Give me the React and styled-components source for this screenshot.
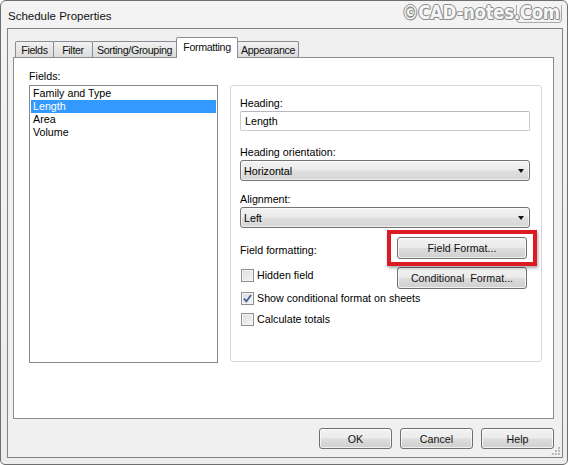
import styled, { createGlobalStyle } from "styled-components";

const GlobalStyle = createGlobalStyle`
  html, body {
    margin: 0;
    padding: 0;
    background: #ffffff;
  }
  body {
    font-family: "Liberation Sans", Arial, sans-serif;
    font-size: 10.7px;
    color: #000;
  }
`;

const tabs = [
  { label: "Fields", width: 39 },
  { label: "Filter", width: 40 },
  { label: "Sorting/Grouping", width: 85 },
  { label: "Formatting", width: 62, active: true },
  { label: "Appearance", width: 62 },
];

const fields = ["Family and Type", "Length", "Area", "Volume"];

export default function App() {
  return (
    <>
      <GlobalStyle />
      <Window>
        <TitleBar>
          <Title>Schedule Properties</Title>
          <CaptionButton />
        </TitleBar>
        <Watermark>©CAD-notes.Com</Watermark>
        <ClientFrame>
          <TabStrip>
            {tabs.map((tab) => (
              <Tab key={tab.label} $width={tab.width} $active={tab.active}>
                {tab.label}
              </Tab>
            ))}
          </TabStrip>
          <Panel>
            <FieldsLabel>Fields:</FieldsLabel>
            <ListBox>
              {fields.map((name) => (
                <ListItem key={name} $selected={name === "Length"}>
                  {name}
                </ListItem>
              ))}
            </ListBox>
            <GroupBox>
              <Label>Heading:</Label>
              <TextBox>Length</TextBox>
              <Label $gap={14}>Heading orientation:</Label>
              <Select>
                Horizontal
                <Arrow />
              </Select>
              <Label $gap={11}>Alignment:</Label>
              <Select>
                Left
                <Arrow />
              </Select>
              <FormatGrid>
                <GridLabel>Field formatting:</GridLabel>
                <Highlight>
                  <Button>Field Format...</Button>
                </Highlight>
                <CheckRow $offset={1}>
                  <CheckBox />
                  Hidden field
                </CheckRow>
                <Button>Conditional&nbsp; Format...</Button>
              </FormatGrid>
              <CheckList>
                <CheckRow>
                  <CheckBox $checked>
                    <svg width="9" height="9" viewBox="0 0 9 9">
                      <path
                        d="M1 4.6 L3.4 7.4 L8 1"
                        fill="none"
                        stroke="#3b5a9c"
                        strokeWidth="1.7"
                      />
                    </svg>
                  </CheckBox>
                  Show conditional format on sheets
                </CheckRow>
                <CheckRow>
                  <CheckBox />
                  Calculate totals
                </CheckRow>
              </CheckList>
            </GroupBox>
          </Panel>
          <ButtonRow>
            <Button $width={73}>OK</Button>
            <Button $width={73}>Cancel</Button>
            <Button $width={73}>Help</Button>
          </ButtonRow>
          <Grip>
            <svg width="8" height="8" viewBox="0 0 8 8">
              {[
                [6, 0],
                [6, 3],
                [3, 3],
                [6, 6],
                [3, 6],
                [0, 6],
              ].map(([x, y]) => (
                <rect key={`${x}-${y}`} x={x} y={y} width="2" height="2" fill="#b8b8b8" />
              ))}
            </svg>
          </Grip>
        </ClientFrame>
      </Window>
    </>
  );
}

const Window = styled.div`
  position: relative;
  box-sizing: border-box;
  width: 568px;
  height: 465px;
  border: 1px solid #6e6e6e;
  border-radius: 6px 6px 5px 5px;
  background: linear-gradient(#f3f3f3, #ececec);
  display: flex;
  flex-direction: column;
`;

const TitleBar = styled.div`
  height: 27px;
  display: flex;
  align-items: center;
  justify-content: space-between;
  padding: 2px 5px 0 7px;
  box-sizing: border-box;
`;

const Title = styled.span`
  font-size: 11.5px;
  color: #111;
`;

const CaptionButton = styled.div`
  width: 44px;
  height: 17px;
  margin-top: -4px;
  border: 1px solid #a9a9a9;
  border-top: none;
  border-radius: 0 0 4px 4px;
`;

const Watermark = styled.div`
  position: absolute;
  top: 0;
  right: 7px;
  font-family: "DejaVu Sans Condensed", "DejaVu Sans", sans-serif;
  font-weight: bold;
  font-size: 19px;
  letter-spacing: -0.3px;
  color: #f6f6f6;
  transform: scaleX(0.97);
  transform-origin: right center;
  text-shadow: -1px 0 #8c8c8c, 1px 0 #8c8c8c, 0 -1px #8c8c8c, 0 1px #8c8c8c,
    1px 1px #9a9a9a;
`;

const ClientFrame = styled.div`
  position: relative;
  box-sizing: border-box;
  height: 430px;
  margin: 0 4px 6px 6px;
  border: 1px solid #838383;
  background: #f0f0f0;
  padding: 8px 8px 0 5px;
  display: flex;
  flex-direction: column;
`;

const TabStrip = styled.div`
  height: 20px;
  display: flex;
  align-items: flex-end;
  padding-left: 2px;
`;

const Tab = styled.div`
  position: relative;
  box-sizing: border-box;
  width: ${(p) => p.$width}px;
  height: ${(p) => (p.$active ? 21 : 16)}px;
  margin-left: -1px;
  margin-bottom: ${(p) => (p.$active ? -1 : 0)}px;
  z-index: ${(p) => (p.$active ? 1 : 0)};
  border: 1px solid #898c95;
  border-bottom: none;
  border-radius: 2px 2px 0 0;
  background: ${(p) =>
    p.$active ? "#ffffff" : "linear-gradient(#f2f2f2, #e6e6e6 50%, #dcdcdc)"};
  display: flex;
  align-items: center;
  justify-content: center;
  padding-bottom: ${(p) => (p.$active ? 2 : 0)}px;
  white-space: nowrap;
  letter-spacing: -0.35px;
  color: #111;

  &:first-child {
    margin-left: 0;
  }
`;

const Panel = styled.div`
  box-sizing: border-box;
  height: 362px;
  border: 1px solid #898c95;
  background: #ffffff;
  padding: 11px 0 0 15px;
  display: grid;
  grid-template-columns: 189px 312px;
  grid-template-rows: 14px 278px;
  column-gap: 12px;
  row-gap: 2px;
  align-content: start;
`;

const FieldsLabel = styled.div`
  grid-column: 1;
  line-height: 14px;
`;

const ListBox = styled.div`
  grid-column: 1;
  grid-row: 2;
  box-sizing: border-box;
  border: 1px solid #828790;
  padding: 1px;
`;

const ListItem = styled.div`
  height: 13px;
  line-height: 13px;
  padding-left: 2px;
  background: ${(p) => (p.$selected ? "#3399ff" : "transparent")};
  color: ${(p) => (p.$selected ? "#ffffff" : "#000")};
`;

const GroupBox = styled.div`
  grid-column: 2;
  grid-row: 2;
  box-sizing: border-box;
  height: 277px;
  border: 1px solid #d5d9dc;
  border-radius: 3px;
  padding: 10px 11px 0 9px;
  display: flex;
  flex-direction: column;
`;

const Label = styled.div`
  line-height: 14px;
  margin-top: ${(p) => p.$gap || 0}px;
  margin-bottom: 1px;
`;

const TextBox = styled.div`
  box-sizing: border-box;
  height: 20px;
  border: 1px solid #c9cbd0;
  border-top-color: #b5b8bf;
  border-radius: 2px;
  padding-left: 4px;
  display: flex;
  align-items: center;
`;

const Select = styled.div`
  position: relative;
  box-sizing: border-box;
  height: 21px;
  border: 1px solid #737373;
  border-radius: 3px;
  background: linear-gradient(#f3f3f3, #ebebeb 45%, #dedede 55%, #d6d6d6);
  box-shadow: inset 0 0 0 1px rgba(255, 255, 255, 0.6);
  padding-left: 3px;
  display: flex;
  align-items: center;
  justify-content: space-between;
`;

const Arrow = styled.span`
  width: 0;
  height: 0;
  margin-right: 5px;
  border-left: 3.5px solid transparent;
  border-right: 3.5px solid transparent;
  border-top: 4px solid #111;
`;

const FormatGrid = styled.div`
  margin-top: 9px;
  padding-right: 3px;
  display: grid;
  grid-template-columns: 1fr 130px;
  grid-template-rows: 22px 22px;
  row-gap: 8px;
`;

const GridLabel = styled.div`
  line-height: 14px;
  padding-top: 6px;
`;

const Highlight = styled.div`
  position: relative;
  display: flex;

  &::after {
    content: "";
    position: absolute;
    inset: -7px -10px;
    border: 4px solid #dc1a21;
    box-shadow: 1px 2px 3px rgba(0, 0, 0, 0.35);
    pointer-events: none;
  }

  & > * {
    flex: 1;
  }
`;

const Button = styled.div`
  box-sizing: border-box;
  width: ${(p) => (p.$width ? `${p.$width}px` : "auto")};
  height: ${(p) => (p.$width ? 21 : 22)}px;
  border: 1px solid #707070;
  border-radius: 3px;
  background: linear-gradient(#f2f2f2, #ebebeb 48%, #dddddd 52%, #cfcfcf);
  box-shadow: inset 0 0 0 1px rgba(255, 255, 255, 0.7);
  display: flex;
  align-items: center;
  justify-content: center;
  white-space: nowrap;
  color: #111;
`;

const CheckRow = styled.div`
  height: 14px;
  margin-top: ${(p) => p.$offset || 0}px;
  margin-left: 1px;
  display: flex;
  align-items: center;
  gap: 3px;
  white-space: nowrap;
`;

const CheckBox = styled.span`
  box-sizing: border-box;
  width: 13px;
  height: 13px;
  border: 1px solid #8f8f8f;
  background: linear-gradient(135deg, #dcdcdc, #f6f6f6);
  box-shadow: inset 0 0 0 1px #f4f4f4;
  display: flex;
  align-items: center;
  justify-content: center;
`;

const CheckList = styled.div`
  margin-top: 2px;
  display: flex;
  flex-direction: column;
  gap: 7px;
`;

const ButtonRow = styled.div`
  margin-top: 9px;
  display: flex;
  justify-content: flex-end;
  gap: 8px;
`;

const Grip = styled.div`
  position: absolute;
  right: 2px;
  bottom: 2px;
  display: flex;
`;
